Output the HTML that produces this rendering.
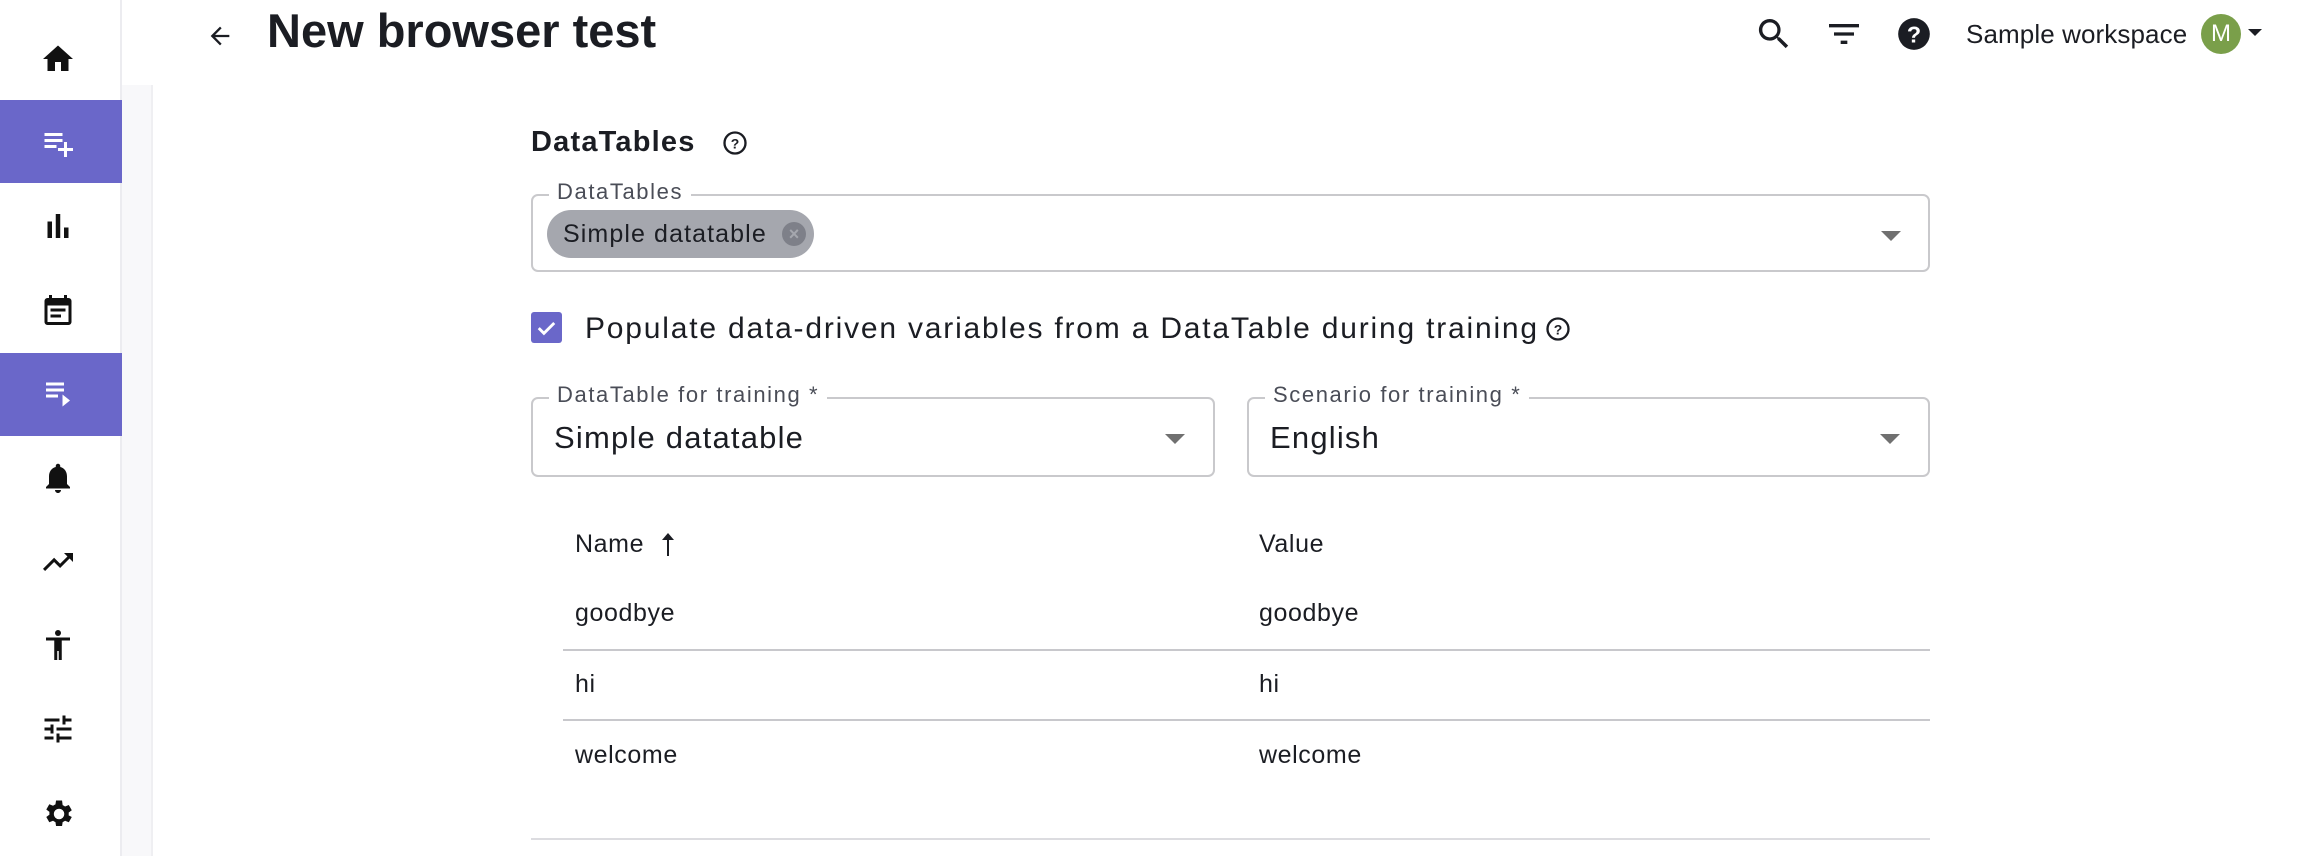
<!DOCTYPE html>
<html><head><meta charset="utf-8"><style>
*{margin:0;padding:0;box-sizing:border-box}
body{width:2300px;height:856px;overflow:hidden;background:#fff;font-family:"Liberation Sans",sans-serif;color:#1b1d23;position:relative}
.a{position:absolute;white-space:nowrap}
.side{position:absolute;left:0;top:0;width:122px;height:856px;border-right:2px solid #ececf0;background:#fff}
.strip{position:absolute;left:122px;top:85px;width:31px;height:771px;background:#f8f8fa;border-right:2px solid #efeff2}
.act{position:absolute;left:0;width:122px;height:83px;background:#6a67c9}
.ic{position:absolute;left:40px;width:36px;height:36px}
.fs{position:absolute;border:2px solid #c9c9cc;border-radius:7px}
.lbl{position:absolute;top:-17px;left:16px;background:#fff;padding:0 8px;font-size:22px;color:#4a4d57;letter-spacing:1.6px}
.caret{position:absolute;width:0;height:0;border-left:10px solid transparent;border-right:10px solid transparent;border-top:10px solid #707070}
.td{font-size:25px;letter-spacing:0.6px}
.line{position:absolute;height:2px;background:#c8c8cc}
</style></head><body>
<div class="side">
  <div class="act" style="top:100px"></div>
  <div class="act" style="top:353px"></div>
  <svg class="ic" style="top:41px" viewBox="0 0 24 24"><path d="M10 20v-6h4v6h5v-8h3L12 3 2 12h3v8z" fill="#111"/></svg>
  <svg class="ic" style="top:124px" viewBox="0 0 24 24"><path d="M3 6h12v2H3zM3 10h12v2H3zM3 14h8v2H3zM16 12h2v4h4v2h-4v4h-2v-4h-4v-2h4z" fill="#fff"/></svg>
  <svg class="ic" style="top:208px" viewBox="0 0 24 24"><path d="M5 9h3v11H5zM10.5 4h3v16h-3zM16 13h3v7h-3z" fill="#111"/></svg>
  <svg class="ic" style="top:292px" viewBox="0 0 24 24"><path d="M19 4h-1V2h-2v2H8V2H6v2H5a2 2 0 0 0-2 2v14a2 2 0 0 0 2 2h14a2 2 0 0 0 2-2V6a2 2 0 0 0-2-2zm0 16H5V9h14zM7 11h10v2H7zm0 4h7v2H7z" fill="#111"/></svg>
  <svg class="ic" style="top:375px" viewBox="0 0 24 24"><path d="M4 5h12v2H4zM4 9h12v2H4zM4 13h8v2H4zM15 13l5 4-5 4z" fill="#fff"/></svg>
  <svg class="ic" style="top:460px" viewBox="0 0 24 24"><path d="M12 22c1.1 0 2-.9 2-2h-4c0 1.1.9 2 2 2zm6-6v-5c0-3.1-1.6-5.6-4.5-6.3V4a1.5 1.5 0 0 0-3 0v.7C7.6 5.4 6 7.9 6 11v5l-2 2v1h16v-1z" fill="#111"/></svg>
  <svg class="ic" style="top:544px" viewBox="0 0 24 24"><path d="M16 6l2.3 2.3-4.9 4.9-4-4L2 16.6 3.4 18l6-6 4 4 6.3-6.3L22 12V6z" fill="#111"/></svg>
  <svg class="ic" style="top:627px" viewBox="0 0 24 24"><circle cx="12" cy="4" r="2" fill="#111"/><path d="M20 7H4v2h5.5v13h2v-6h1v6h2V9H20z" fill="#111"/></svg>
  <svg class="ic" style="top:711px" viewBox="0 0 24 24"><path d="M3 17v2h6v-2zM3 5v2h10V5zm10 16v-2h8v-2h-8v-2h-2v6zM7 9v2H3v2h4v2h2V9zm14 4v-2H11v2zm-6-4h2V7h4V5h-4V3h-2z" fill="#111"/></svg>
  <svg class="ic" style="top:796px" viewBox="0 0 24 24"><path d="M19.1 12.9a7 7 0 0 0 0-1.8l2.1-1.6-2-3.5-2.5 1a7 7 0 0 0-1.6-.9L14.7 3h-4l-.4 2.6a7 7 0 0 0-1.6.9l-2.5-1-2 3.5 2.1 1.6a7 7 0 0 0 0 1.8l-2.1 1.6 2 3.5 2.5-1c.5.4 1 .7 1.6.9l.4 2.6h4l.4-2.6c.6-.2 1.1-.5 1.6-.9l2.5 1 2-3.5zM12.7 15.5a3.5 3.5 0 1 1 0-7 3.5 3.5 0 0 1 0 7z" fill="#111"/></svg>
</div>
<div class="strip"></div>

<svg class="a" style="left:206px;top:22px;width:28px;height:28px" viewBox="0 0 24 24"><path d="M20 11H7.8l5.6-5.6L12 4l-8 8 8 8 1.4-1.4L7.8 13H20z" fill="#1b1d23"/></svg>
<div class="a" style="left:267px;top:3px;font-size:47px;font-weight:bold;letter-spacing:0px">New browser test</div>

<svg class="a" style="left:1754px;top:14px;width:40px;height:40px" viewBox="0 0 24 24"><path d="M15.5 14h-.8l-.3-.3A6.5 6.5 0 1 0 9.5 16a6.5 6.5 0 0 0 4.2-1.6l.3.3v.8l5 5 1.5-1.5zm-6 0a4.5 4.5 0 1 1 0-9 4.5 4.5 0 0 1 0 9z" fill="#1b1d23"/></svg>
<svg class="a" style="left:1824px;top:14px;width:40px;height:40px" viewBox="0 0 24 24"><path d="M3 6h18v2H3zM6 11h12v2H6zM10 16h4v2h-4z" fill="#1b1d23"/></svg>
<svg class="a" style="left:1894px;top:14px;width:40px;height:40px" viewBox="0 0 24 24"><circle cx="12" cy="12" r="9.5" fill="#1b1d23"/><text x="12" y="17" font-size="14" font-weight="bold" text-anchor="middle" fill="#fff" font-family="Liberation Sans">?</text></svg>
<div class="a" style="left:1966px;top:19px;font-size:26px;letter-spacing:0.1px">Sample workspace</div>
<div class="a" style="left:2201px;top:14px;width:40px;height:40px;border-radius:50%;background:#7a9f4a;color:#fff;font-size:24px;text-align:center;line-height:40px">M</div>
<div class="caret" style="left:2248px;top:29px;border-left-width:7px;border-right-width:7px;border-top:7px solid #1b1d23"></div>

<div class="a" style="left:531px;top:126px;font-size:29px;font-weight:bold;letter-spacing:1.2px">DataTables</div>
<svg class="a" style="left:721px;top:129px;width:28px;height:28px" viewBox="0 0 24 24"><circle cx="12" cy="12" r="9" fill="none" stroke="#1b1d23" stroke-width="2"/><text x="12" y="16.5" font-size="12" font-weight="bold" text-anchor="middle" fill="#1b1d23" font-family="Liberation Sans">?</text></svg>

<div class="fs" style="left:531px;top:194px;width:1399px;height:78px">
  <div class="lbl">DataTables</div>
  <div class="a" style="left:14px;top:14px;width:267px;height:48px;border-radius:24px;background:#a5a7ae;font-size:25px;line-height:48px;padding-left:16px;letter-spacing:1.1px">Simple datatable
    <span style="position:absolute;right:8px;top:12px;width:24px;height:24px;border-radius:50%;background:#7e8089;color:#a5a7ae;font-size:18px;line-height:24px;text-align:center;font-weight:bold;letter-spacing:0">×</span></div>
  <div class="caret" style="left:1348px;top:35px"></div>
</div>

<div class="a" style="left:531px;top:312px;width:31px;height:31px;border-radius:3px;background:#6a67c9"></div>
<svg class="a" style="left:531px;top:312px;width:31px;height:31px" viewBox="0 0 24 24"><path d="M6 12.5l4 4 8-8" fill="none" stroke="#fff" stroke-width="2.2"/></svg>
<div class="a" style="left:585px;top:312px;font-size:30px;letter-spacing:1.8px">Populate data-driven variables from a DataTable during training</div>
<svg class="a" style="left:1544px;top:315px;width:28px;height:28px" viewBox="0 0 24 24"><circle cx="12" cy="12" r="9" fill="none" stroke="#1b1d23" stroke-width="2"/><text x="12" y="16.5" font-size="12" font-weight="bold" text-anchor="middle" fill="#1b1d23" font-family="Liberation Sans">?</text></svg>

<div class="fs" style="left:531px;top:397px;width:684px;height:80px">
  <div class="lbl">DataTable for training *</div>
  <div class="a" style="left:21px;top:21px;font-size:31px;letter-spacing:1.2px">Simple datatable</div>
  <div class="caret" style="left:632px;top:35px"></div>
</div>
<div class="fs" style="left:1247px;top:397px;width:683px;height:80px">
  <div class="lbl">Scenario for training *</div>
  <div class="a" style="left:21px;top:21px;font-size:31px;letter-spacing:1.2px">English</div>
  <div class="caret" style="left:631px;top:35px"></div>
</div>

<div class="a td" style="left:575px;top:530px">Name</div>
<svg class="a" style="left:656px;top:530px;width:24px;height:28px" viewBox="0 0 24 28"><path d="M12 3l-6 7h5v16h2V10h5z" fill="#1b1d23"/></svg>
<div class="a td" style="left:1259px;top:530px">Value</div>
<div class="a td" style="left:575px;top:599px">goodbye</div>
<div class="a td" style="left:1259px;top:599px">goodbye</div>
<div class="line" style="left:563px;top:649px;width:1367px"></div>
<div class="a td" style="left:575px;top:670px">hi</div>
<div class="a td" style="left:1259px;top:670px">hi</div>
<div class="line" style="left:563px;top:719px;width:1367px"></div>
<div class="a td" style="left:575px;top:741px">welcome</div>
<div class="a td" style="left:1259px;top:741px">welcome</div>
<div class="line" style="left:531px;top:838px;width:1399px;background:#dcdce0"></div>
</body></html>
